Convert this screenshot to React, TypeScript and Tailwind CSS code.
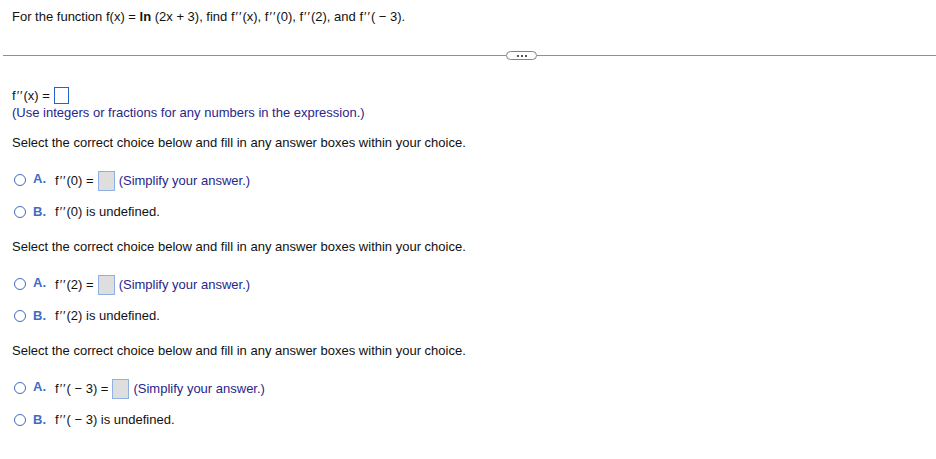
import React from "react";

function F() {
  return (
    <span>
      f<span className="tracking-[1px] ml-[1px]">{"\u2032\u2032"}</span>
    </span>
  );
}

function Box() {
  return <span className="inline-block w-[17px] h-[20px] bg-[#dedede] border border-[#8fb0e6] mx-[4px]" />;
}

function Radio() {
  return <span className="inline-block w-[12px] h-[12px] rounded-full border-[1.5px] border-[#3b6ec5] bg-white" />;
}

function Group({ arg, first }: { arg: string; first?: boolean }) {
  return (
    <>
      <div className={`pl-[12px] leading-[16px] ${first ? "mt-[14px]" : "mt-[19px]"}`}>
        Select the correct choice below and fill in any answer boxes within your choice.
      </div>
      <div className="flex items-center h-[20px] mt-[20px]">
        <div className="w-[33px] flex justify-start pl-[14px] -mt-[3px]">
          <Radio />
        </div>
        <span className="w-[22px] font-bold text-[#3b6ec5] -mt-[4px]">A.</span>
        <span className="flex items-center">
          <span>
            <F />({arg}) =
          </span>
          <Box />
          <span className="text-[#27268c]">(Simplify your answer.)</span>
        </span>
      </div>
      <div className="flex items-center h-[16px] mt-[13px]">
        <div className="w-[33px] flex justify-start pl-[14px]">
          <Radio />
        </div>
        <span className="w-[22px] font-bold text-[#3b6ec5]">B.</span>
        <span>
          <F />({arg}) is undefined.
        </span>
      </div>
    </>
  );
}

export default function App() {
  return (
    <div className="w-[936px] h-[459px] bg-white text-[13px] text-[#111] font-['Liberation_Sans',Arial,sans-serif] pt-[9px]">
      <div className="pl-[12px] leading-[16px]">
        For the function f(x) = <b>ln</b> (2x + 3), find <F />(x), <F />(0), <F />(2), and <F />( − 3).
      </div>
      <div className="flex items-center h-[9px] mt-[26px] pl-[3px]">
        <div className="w-[503px] h-px bg-[#8592a0]" />
        <div className="w-[31px] h-[9px] rounded-full border border-[#7a8591] bg-white flex items-center justify-center gap-[2px]">
          <span className="w-[2px] h-[2px] bg-[#4a5560]" />
          <span className="w-[2px] h-[2px] bg-[#4a5560]" />
          <span className="w-[2px] h-[2px] bg-[#4a5560]" />
        </div>
        <div className="flex-1 h-px bg-[#8592a0]" />
      </div>
      <div className="flex items-center h-[17px] mt-[27px] pl-[12px]">
        <span>
          <F />(x) =
        </span>
        <span className="inline-block w-[15px] h-[17px] border-[1.5px] border-[#2563c9] ml-[4px] bg-white" />
      </div>
      <div className="pl-[12px] leading-[16px] mt-[1px] text-[#27268c]">
        (Use integers or fractions for any numbers in the expression.)
      </div>
      <Group arg="0" first />
      <Group arg="2" />
      <Group arg=" − 3" />
    </div>
  );
}
